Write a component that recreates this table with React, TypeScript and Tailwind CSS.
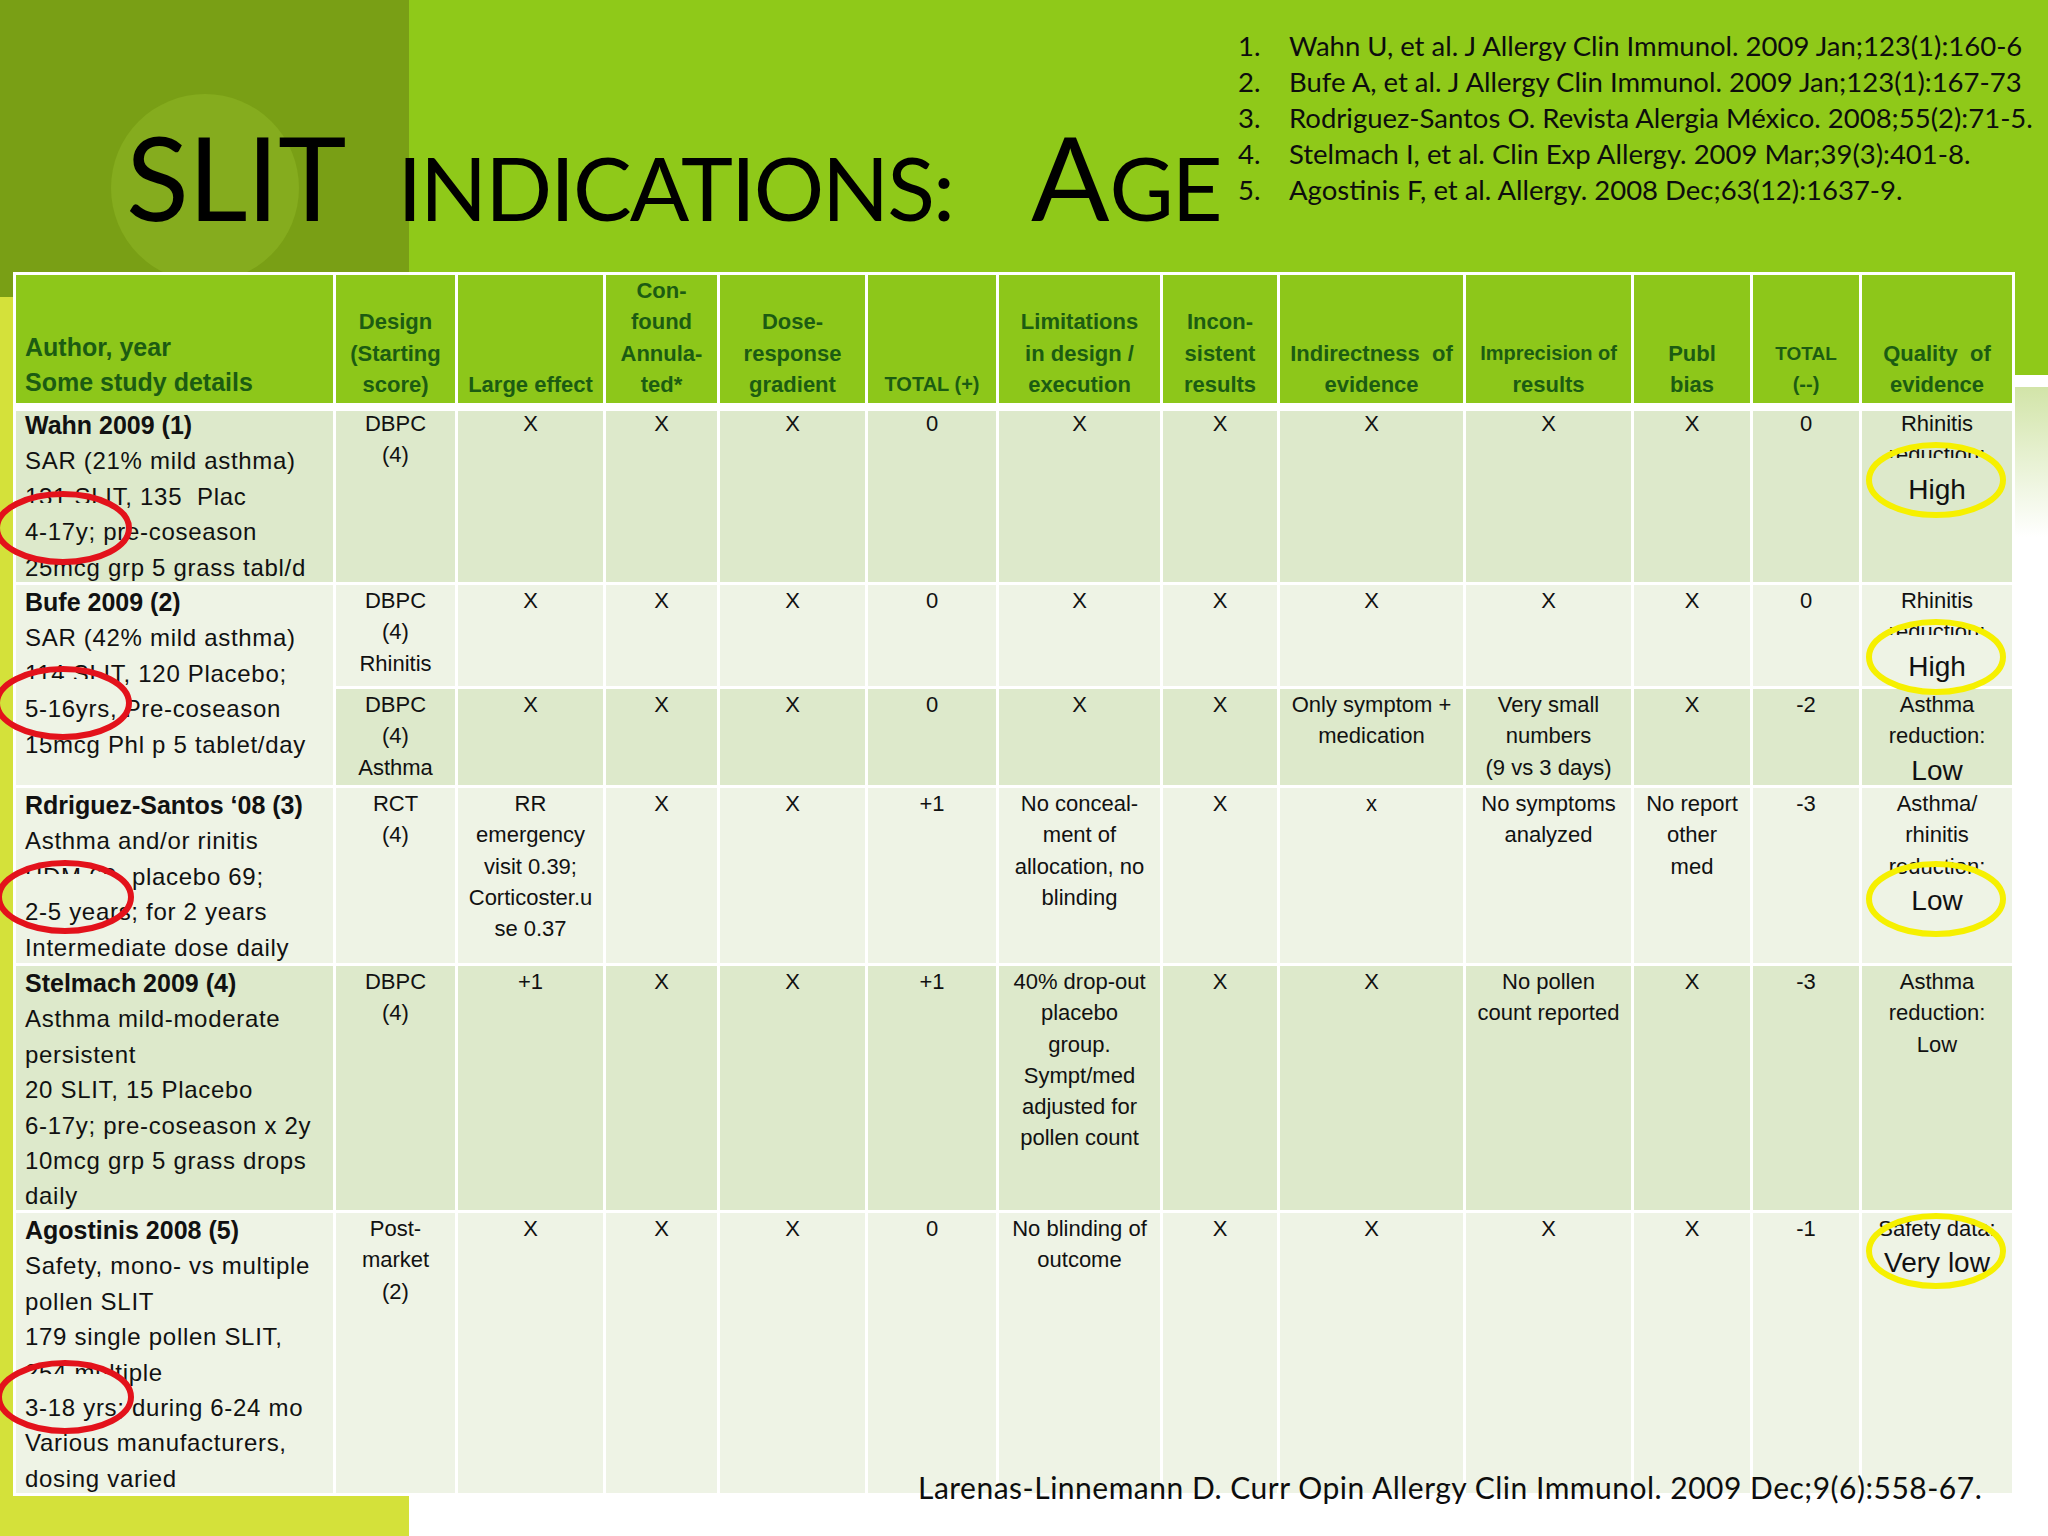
import { Fragment } from "react";

const COLS =
  "grid-cols-[317px_119px_145px_111px_145px_128px_161px_114px_183px_165px_116px_106px_150px]";

const DARK = "bg-[#dde9cb]";
const LIGHT = "bg-[#eef3e5]";
const DARK_HEX = "#dde9cb";
const LIGHT_HEX = "#eef3e5";

const X = "X";

type Value = string | string[];

interface Row {
  bg: string;
  big?: boolean;
  lift?: boolean;
  study?: { title: string; lines: string[]; age: number; span?: boolean };
  cells: Value[];
}

const REFS = [
  "Wahn U, et al. J Allergy Clin Immunol. 2009 Jan;123(1):160-6",
  "Bufe A, et al. J Allergy Clin Immunol. 2009 Jan;123(1):167-73",
  "Rodriguez-Santos O. Revista Alergia México. 2008;55(2):71-5.",
  "Stelmach I, et al. Clin Exp Allergy. 2009 Mar;39(3):401-8.",
  "Agostinis F, et al. Allergy. 2008 Dec;63(12):1637-9.",
];

const ROWS: Row[] = [
  {
    bg: DARK,
    big: true,
    lift: true,
    study: {
      title: "Wahn 2009 (1)",
      lines: ["SAR (21% mild asthma)", "131 SLIT, 135  Plac", "4-17y; pre-coseason", "25mcg grp 5 grass tabl/d"],
      age: 2,
    },
    cells: [["DBPC", "(4)"], X, X, X, "0", X, X, X, X, X, "0", ["Rhinitis", "reduction:", "High"]],
  },
  {
    bg: LIGHT,
    big: true,
    study: {
      title: "Bufe 2009 (2)",
      lines: ["SAR (42% mild asthma)", "114 SLIT, 120 Placebo;", "5-16yrs, Pre-coseason", "15mcg Phl p 5 tablet/day"],
      age: 2,
      span: true,
    },
    cells: [["DBPC", "(4)", "Rhinitis"], X, X, X, "0", X, X, X, X, X, "0", ["Rhinitis", "reduction:", "High"]],
  },
  {
    bg: DARK,
    big: true,
    cells: [
      ["DBPC", "(4)", "Asthma"],
      X,
      X,
      X,
      "0",
      X,
      X,
      ["Only symptom +", "medication"],
      ["Very small", "numbers", "(9 vs 3 days)"],
      X,
      "-2",
      ["Asthma", "reduction:", "Low"],
    ],
  },
  {
    bg: LIGHT,
    big: true,
    study: {
      title: "Rdriguez-Santos \u201808 (3)",
      lines: ["Asthma and/or rinitis", "HDM 69, placebo 69;", "2-5 years; for 2 years", "Intermediate dose daily"],
      age: 2,
    },
    cells: [
      ["RCT", "(4)"],
      ["RR", "emergency", "visit 0.39;", "Corticoster.u", "se 0.37"],
      X,
      X,
      "+1",
      ["No conceal-", "ment of", "allocation, no", "blinding"],
      X,
      "x",
      ["No symptoms", "analyzed"],
      ["No report", "other", "med"],
      "-3",
      ["Asthma/", "rhinitis", "reduction:", "Low"],
    ],
  },
  {
    bg: DARK,
    study: {
      title: "Stelmach 2009 (4)",
      lines: [
        "Asthma mild-moderate",
        "persistent",
        "20 SLIT, 15 Placebo",
        "6-17y; pre-coseason x 2y",
        "10mcg grp 5 grass drops",
        "daily",
      ],
      age: -1,
    },
    cells: [
      ["DBPC", "(4)"],
      "+1",
      X,
      X,
      "+1",
      ["40% drop-out", "placebo", "group.", "Sympt/med", "adjusted for", "pollen count"],
      X,
      X,
      ["No pollen", "count reported"],
      X,
      "-3",
      ["Asthma", "reduction:", "Low"],
    ],
  },
  {
    bg: LIGHT,
    big: true,
    study: {
      title: "Agostinis 2008 (5)",
      lines: [
        "Safety, mono- vs multiple",
        "pollen SLIT",
        "179 single pollen SLIT,",
        "254 multiple",
        "3-18 yrs; during 6-24 mo",
        "Various manufacturers,",
        "dosing varied",
      ],
      age: 4,
    },
    cells: [["Post-", "market", "(2)"], X, X, X, "0", ["No blinding of", "outcome"], X, X, X, X, "-1", ["Safety data:", "Very low"]],
  },
];

// hand-drawn highlight ellipses; `top` is where the patch behind the label starts
const RED = [
  { cx: 63, cy: 528, top: 503, fill: DARK_HEX },
  { cx: 63, cy: 703, top: 679, fill: LIGHT_HEX },
  { cx: 65, cy: 897, top: 874, fill: LIGHT_HEX },
  { cx: 65, cy: 1397, top: 1374, fill: LIGHT_HEX },
];
const YELLOW = [
  { cx: 1936, cy: 480, top: 458, fill: DARK_HEX },
  { cx: 1936, cy: 657, top: 635, fill: LIGHT_HEX },
  { cx: 1936, cy: 899, top: 877, fill: LIGHT_HEX },
  { cx: 1936, cy: 1251, top: 1240, fill: LIGHT_HEX },
];

function Head({ lines, left }: { lines: [string, string?][]; left?: boolean }) {
  return (
    <div
      className={`flex flex-col justify-end bg-[#8dc71a] pb-[3px] font-bold text-[#1c5c12] ${
        left ? "items-start pl-[9px] text-[25px] leading-[35px]" : "items-center text-center text-[22px] leading-[31.3px]"
      }`}
    >
      {lines.map(([t, size], i) => (
        <div key={i} className={`whitespace-pre ${size ?? ""}`}>
          {t}
        </div>
      ))}
    </div>
  );
}

function Cell({ v, bg, big, lift }: { v: Value; bg: string; big?: boolean; lift?: boolean }) {
  const lines = Array.isArray(v) ? v : [v];
  return (
    <div className={`${bg} text-center text-[22px] leading-[31.3px]`}>
      <div className={lift ? "-mt-[3px]" : ""}>
        {lines.map((l, i) =>
          big && i === lines.length - 1 ? (
            <div key={i} className="relative z-20 text-[28px] leading-[38px]">
              {l}
            </div>
          ) : (
            <div key={i}>{l}</div>
          )
        )}
      </div>
    </div>
  );
}

function Study({ s, bg, lift }: { s: NonNullable<Row["study"]>; bg: string; lift?: boolean }) {
  return (
    <div className={`${bg} ${s.span ? "row-span-2" : ""} pl-[9px] text-[24px] leading-[35.4px] tracking-[0.7px]`}>
      <div className={lift ? "-mt-[3px]" : ""}>
        <div className="text-[25px] font-bold tracking-normal">{s.title}</div>
        {s.lines.map((l, i) => (
          <div key={i} className={`whitespace-pre ${i === s.age ? "relative z-20" : ""}`}>
            {l}
          </div>
        ))}
      </div>
    </div>
  );
}

export default function App() {
  const marks = [...RED, ...YELLOW];
  return (
    <div className="relative h-[1536px] w-[2048px] overflow-hidden bg-white font-['Liberation_Sans',Arial,sans-serif] text-[#111111]">
      {/* slide background */}
      <div className="absolute inset-x-0 top-0 h-[375px] bg-[#8fc919]" />
      <div className="absolute inset-x-0 top-[387px] h-[150px] bg-gradient-to-b from-[#d2e4a8] to-white" />
      <div className="absolute left-0 top-0 h-[297px] w-[409px] bg-[#799f15]" />
      <div className="absolute bottom-0 left-0 top-[297px] w-[409px] bg-[#d4e13a]" />
      <div className="absolute left-[111px] top-[94px] h-[188px] w-[188px] rounded-full bg-[#85ac1e]" />

      <div className="relative flex flex-col">
        {/* title + references */}
        <div className="flex h-[272px]">
          <div className="w-[1238px] flex-none pl-[126px] pt-[119px]">
            <h1 className="flex items-baseline whitespace-nowrap font-['Lato',sans-serif] font-normal leading-none text-black">
              <span className="text-[116px] tracking-[-1px]">SLIT</span>
              <span className="ml-[52px] text-[88px] tracking-[-2px]">INDICATIONS:</span>
              <span className="ml-[78px] text-[116px]">A</span>
              <span className="text-[88px] tracking-[-2px]">GE</span>
            </h1>
          </div>
          <ol className="pt-[28px] font-['Lato',sans-serif] text-[27.5px] leading-[36px] text-[#0d0d0d]">
            {REFS.map((r, i) => (
              <li key={i} className="flex whitespace-nowrap">
                <span className="w-[51px] flex-none">{i + 1}.</span>
                <span>{r}</span>
              </li>
            ))}
          </ol>
        </div>

        {/* evidence table */}
        <div className="ml-[13px] w-[2002px] bg-white p-[3px]">
          <div className={`grid h-[127px] ${COLS} gap-[3px]`}>
            <Head left lines={[["Author, year"], ["Some study details"]]} />
            <Head lines={[["Design"], ["(Starting"], ["score)"]]} />
            <Head lines={[["Large effect"]]} />
            <Head lines={[["Con-"], ["found"], ["Annula-"], ["ted*"]]} />
            <Head lines={[["Dose-"], ["response"], ["gradient"]]} />
            <Head lines={[["TOTAL (+)", "text-[20px]"]]} />
            <Head lines={[["Limitations"], ["in design /"], ["execution"]]} />
            <Head lines={[["Incon-"], ["sistent"], ["results"]]} />
            <Head lines={[["Indirectness  of"], ["evidence"]]} />
            <Head lines={[["Imprecision of", "text-[20px]"], ["results"]]} />
            <Head lines={[["Publ"], ["bias"]]} />
            <Head lines={[["TOTAL", "text-[19px]"], ["(--)", "text-[20px]"]]} />
            <Head lines={[["Quality  of"], ["evidence"]]} />
          </div>

          <div className={`mt-[9px] grid ${COLS} grid-rows-[171px_101px_96px_175px_244px_280px] gap-[3px]`}>
            {ROWS.map((row, r) => (
              <Fragment key={r}>
                {row.study && <Study s={row.study} bg={row.study.span ? LIGHT : row.bg} lift={row.lift} />}
                {row.cells.map((c, i) => (
                  <Cell key={i} v={c} bg={row.bg} lift={row.lift} big={row.big && i === row.cells.length - 1} />
                ))}
              </Fragment>
            ))}
          </div>
        </div>
      </div>

      {/* patch behind each circled label, cut off above the label */}
      <svg
        className="pointer-events-none absolute left-[16px] top-0 z-10"
        width={1996}
        height={1536}
        viewBox="16 0 1996 1536"
      >
        <defs>
          {marks.map((m, i) => (
            <clipPath key={i} id={`patch${i}`}>
              <rect x={0} y={m.top} width={2048} height={120} />
            </clipPath>
          ))}
        </defs>
        {marks.map((m, i) => (
          <ellipse key={i} cx={m.cx} cy={m.cy} rx={64} ry={32} fill={m.fill} clipPath={`url(#patch${i})`} />
        ))}
      </svg>
      <svg className="pointer-events-none absolute left-0 top-0 z-30" width={2048} height={1536}>
        {RED.map((e, i) => (
          <ellipse key={i} cx={e.cx} cy={e.cy} rx={66} ry={34} fill="none" stroke="#e3121b" strokeWidth={6} />
        ))}
        {YELLOW.map((e, i) => (
          <ellipse key={i} cx={e.cx} cy={e.cy} rx={67} ry={35} fill="none" stroke="#f6f000" strokeWidth={6} />
        ))}
      </svg>

      <p className="absolute left-[918px] top-[1472px] z-20 whitespace-nowrap font-['Lato',sans-serif] text-[30px] leading-none tracking-[0.5px] text-[#0d0d0d]">
        Larenas-Linnemann D. Curr Opin Allergy Clin Immunol. 2009 Dec;9(6):558-67.
      </p>
    </div>
  );
}
